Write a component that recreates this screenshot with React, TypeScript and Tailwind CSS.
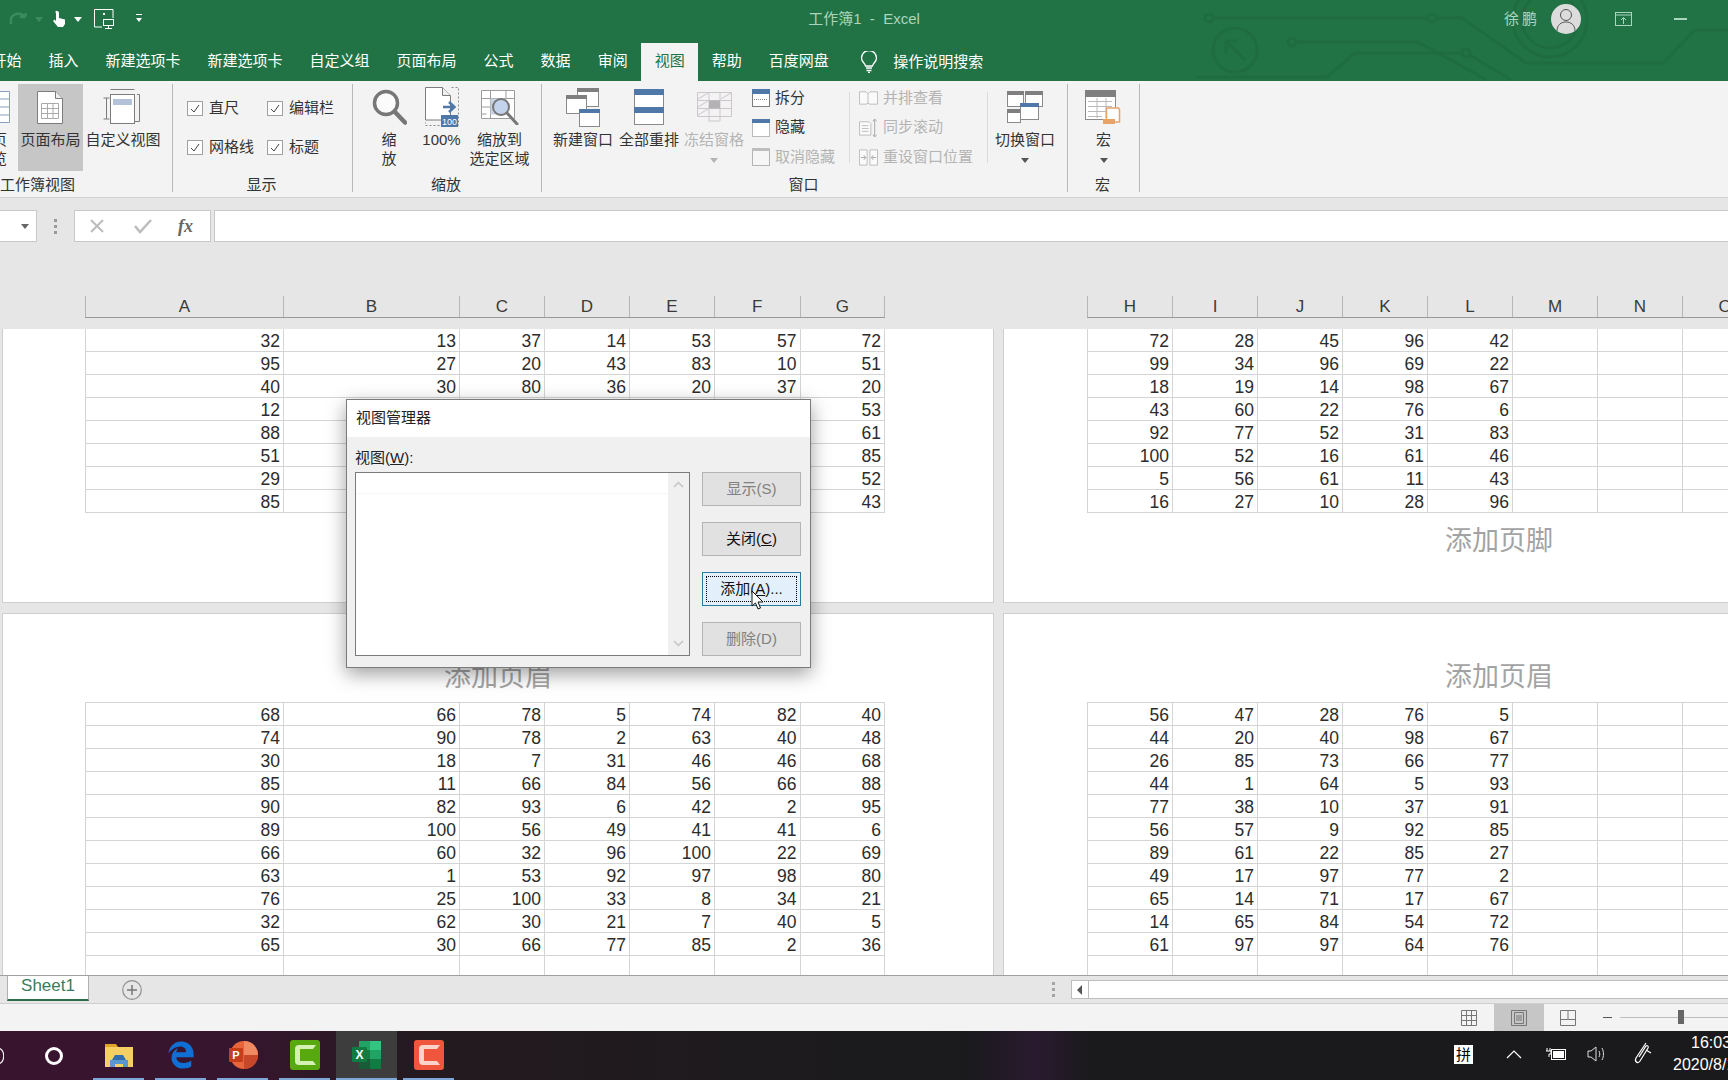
import React from "react";
import { FaEdgeLegacy } from "react-icons/fa6";

const leftW = ["w-[198px]", "w-[176px]", "w-[85px]", "w-[85px]", "w-[85px]", "w-[85.500px]", "w-[85.500px]"];
const rightW = Array(9).fill("w-[85px]");
const leftH = ["A", "B", "C", "D", "E", "F", "G"];
const rightH = ["H", "I", "J", "K", "L", "M", "N", "O", ""];

const tl: (number | string)[][] = [
  [32, 13, 37, 14, 53, 57, 72],
  [95, 27, 20, 43, 83, 10, 51],
  [40, 30, 80, 36, 20, 37, 20],
  [12, 21, 44, 63, 18, 75, 53],
  [88, 46, 9, 70, 35, 24, 61],
  [51, 93, 67, 28, 12, 90, 85],
  [29, 58, 34, 81, 47, 16, 52],
  [85, 72, 11, 39, 64, 55, 43],
];
const tr: (number | string)[][] = [
  [72, 28, 45, 96, 42],
  [99, 34, 96, 69, 22],
  [18, 19, 14, 98, 67],
  [43, 60, 22, 76, 6],
  [92, 77, 52, 31, 83],
  [100, 52, 16, 61, 46],
  [5, 56, 61, 11, 43],
  [16, 27, 10, 28, 96],
];
const bl: (number | string)[][] = [
  [68, 66, 78, 5, 74, 82, 40],
  [74, 90, 78, 2, 63, 40, 48],
  [30, 18, 7, 31, 46, 46, 68],
  [85, 11, 66, 84, 56, 66, 88],
  [90, 82, 93, 6, 42, 2, 95],
  [89, 100, 56, 49, 41, 41, 6],
  [66, 60, 32, 96, 100, 22, 69],
  [63, 1, 53, 92, 97, 98, 80],
  [76, 25, 100, 33, 8, 34, 21],
  [32, 62, 30, 21, 7, 40, 5],
  [65, 30, 66, 77, 85, 2, 36],
  ["", "", "", "", "", "", ""],
];
const br: (number | string)[][] = [
  [56, 47, 28, 76, 5],
  [44, 20, 40, 98, 67],
  [26, 85, 73, 66, 77],
  [44, 1, 64, 5, 93],
  [77, 38, 10, 37, 91],
  [56, 57, 9, 92, 85],
  [89, 61, 22, 85, 27],
  [49, 17, 97, 77, 2],
  [65, 14, 71, 17, 67],
  [14, 65, 84, 54, 72],
  [61, 97, 97, 64, 76],
  ["", "", "", "", ""],
];

function Table({ rows, widths, top }: { rows: (number | string)[][]; widths: string[]; top?: boolean }) {
  return (
    <div className={top ? "border-t border-[#d4d4d4] w-max" : "w-max"}>
      {rows.map((r, i) => (
        <div key={i} className="flex h-[23px]">
          {widths.map((w, j) => (
            <div
              key={j}
              className={`${w} shrink-0 h-[23px] box-border border-l border-b border-[#d4d4d4] text-right pr-[3px] pt-[1px] leading-[23px] text-[17.5px] text-[#2c2c2c] overflow-hidden [font-family:'Liberation_Sans_Narrow','Liberation_Sans',sans-serif] ${
                j === widths.length - 1 ? "border-r" : ""
              }`}
            >
              {r[j] ?? ""}
            </div>
          ))}
        </div>
      ))}
    </div>
  );
}

function ColHeader({ labels, widths }: { labels: string[]; widths: string[] }) {
  return (
    <div className="flex w-max h-[22px] border-b border-[#9a9a9a]">
      {labels.map((l, i) => (
        <div
          key={i}
          className={`${widths[i]} shrink-0 box-border border-l border-[#b6b6b6] ${
            i === labels.length - 1 ? "border-r" : ""
          } flex items-center justify-center text-[17px] text-[#3a3a3a]`}
        >
          {l}
        </div>
      ))}
    </div>
  );
}

function Caret({ color = "#555", className = "" }: { color?: string; className?: string }) {
  return (
    <svg width="8" height="5" viewBox="0 0 8 5" className={className}>
      <path d="M0 0h8L4 5z" fill={color} />
    </svg>
  );
}

function BigBtn({
  w,
  icon,
  lines,
  caret,
  active,
  disabled,
}: {
  w: string;
  icon: React.ReactNode;
  lines: string[];
  caret?: boolean;
  active?: boolean;
  disabled?: boolean;
}) {
  return (
    <div className={`${w} h-[87px] shrink-0 flex flex-col items-center ${active ? "bg-[#c6c6c6]" : ""}`}>
      <div className="h-[46px] flex items-center justify-center shrink-0">{icon}</div>
      <div className={`text-center leading-[19px] whitespace-nowrap ${disabled ? "text-[#b4b4b4]" : "text-[#333]"}`}>
        {lines.map((l) => (
          <div key={l}>{l}</div>
        ))}
      </div>
      {caret && <Caret color={disabled ? "#b4b4b4" : "#555"} className="mt-[9px]" />}
    </div>
  );
}

function Check({ label, w }: { label: string; w: string }) {
  return (
    <div className={`${w} h-[20px] flex items-center gap-[6px] text-[#333]`}>
      <svg width="16" height="15" viewBox="0 0 16 15" className="shrink-0">
        <rect x="0.5" y="0.5" width="15" height="14" fill="#fdfdfd" stroke="#a0a0a0" />
        <path d="M4 8l3 3 5-7" fill="none" stroke="#444" strokeWidth="1" />
      </svg>
      <span>{label}</span>
    </div>
  );
}

function SmallRow({ icon, label, disabled }: { icon: React.ReactNode; label: string; disabled?: boolean }) {
  return (
    <div className={`h-[20px] flex items-center gap-[5px] whitespace-nowrap ${disabled ? "text-[#b4b4b4]" : "text-[#333]"}`}>
      <div className="w-[19px] h-[20px] flex items-center justify-center shrink-0">{icon}</div>
      <span>{label}</span>
    </div>
  );
}

function Group({ w, label, children, labelClass }: { w: string; label: string; children: React.ReactNode; labelClass?: string }) {
  return (
    <div className={`${w} h-[108px] shrink-0 box-border border-r border-[#b8b8b8] flex flex-col overflow-hidden`}>
      <div className="h-[87px] flex shrink-0">{children}</div>
      <div className={`mt-[4px] leading-[20px] text-[#333] whitespace-nowrap ${labelClass ?? "text-center pr-[2px]"}`}>{label}</div>
    </div>
  );
}

const G = "#7c7c7c";
const BLUE = "#4f77a8";

const PageLayoutIcon = () => (
  <svg width="26" height="33" viewBox="0 0 26 33" className="-translate-x-[1px]">
    <path d="M.5.5h18l7 7v25H.5z" fill="#fff" stroke={G} />
    <path d="M18.5.5v7h7" fill="#eee" stroke={G} />
    <path d="M4.5 12.5h17v15h-17zM4.5 17.5h17M4.5 22.5h17M10.5 12.5v15M16 12.5v15" fill="none" stroke="#a9a9a9" />
  </svg>
);
const CustomViewIcon = () => (
  <svg width="37" height="36" viewBox="0 0 37 36" className="-translate-x-[2px]">
    <path d="M7.5.5h24M.5 9h6M.5 30h6M3.5 9v21" fill="none" stroke={G} />
    <path d="M34 5.5h2.500v27H32" fill="none" stroke={G} />
    <rect x="7.500" y="5.500" width="24" height="29" fill="#fff" stroke={G} />
    <rect x="10" y="10" width="19" height="6" fill="#b3c2d8" />
  </svg>
);
const MagnifierIcon = () => (
  <svg width="35" height="36" viewBox="0 0 35 36">
    <circle cx="14" cy="14" r="11.500" fill="#fbfbfb" stroke="#777" strokeWidth="3.500" />
    <path d="M22.500 22.500L33 33.500" stroke="#777" strokeWidth="4.500" strokeLinecap="round" />
  </svg>
);
const HundredIcon = () => (
  <svg width="34" height="40" viewBox="0 0 34 40">
    <path d="M26.500.5h7v38h-33v-3" fill="none" stroke="#8a8a8a" strokeDasharray="2 2" />
    <path d="M.5.5h17l8 8V33H.5z" fill="#fff" stroke={G} />
    <path d="M17.500.5v8h8" fill="#eee" stroke={G} />
    <path d="M18 20h11M24 15l5.500 5-5.500 5" fill="none" stroke={BLUE} strokeWidth="2.500" />
    <rect x="16" y="28" width="17" height="12" fill={BLUE} />
    <text x="24.500" y="37.500" fontSize="9" fill="#fff" textAnchor="middle" fontFamily="Liberation Sans">100</text>
  </svg>
);
const ZoomSelIcon = () => (
  <svg width="38" height="35" viewBox="0 0 38 35">
    <path d="M.5.5h33v28h-33zM.5 8.500h33M.5 17h9M.5 24h5M9.500.5V29M25 .5v9" fill="#fff" stroke="#9c9c9c" />
    <rect x="9.500" y="8.500" width="15" height="16" fill="#c9d3e3" />
    <circle cx="20" cy="17" r="8" fill="#c3d3ec" stroke="#777" strokeWidth="2" />
    <path d="M26 23l10 11" stroke="#777" strokeWidth="3" strokeLinecap="round" />
  </svg>
);
const Win = ({ x, y, w, h, bar }: { x: number; y: number; w: number; h: number; bar: string }) => (
  <g>
    <rect x={x + 0.5} y={y + 0.5} width={w} height={h} fill="#fff" stroke="#8a8a8a" />
    <rect x={x} y={y} width={w + 1} height={4} fill={bar} />
  </g>
);
const NewWinIcon = () => (
  <svg width="35" height="39" viewBox="0 0 35 39">
    <Win x={11} y={0} w={21} h={18} bar="#7f7f7f" />
    <Win x={0} y={7} w={20} h={18} bar="#7f7f7f" />
    <Win x={13} y={21} w={20} h={17} bar={BLUE} />
  </svg>
);
const ArrangeIcon = () => (
  <svg width="30" height="36" viewBox="0 0 30 36">
    <rect x=".5" y=".5" width="29" height="35" fill="#fff" stroke="#8a8a8a" />
    <rect x="0" y="0" width="30" height="6" fill={BLUE} />
    <rect x="0" y="18" width="30" height="6" fill={BLUE} />
  </svg>
);
const FreezeIcon = () => (
  <svg width="35" height="30" viewBox="0 0 35 30">
    <path d="M.5.5h34v24h-34zM.5 8.500h34M.5 16.500h34M12 .5v29M23 .5v24M1 7l10-6M1 15l10-6M1 23l10-6M24 7l10-6M12 29h11V25" fill="none" stroke="#cdc6cd" />
    <rect x="12" y="8.500" width="11" height="8" fill="#b5b2b5" />
  </svg>
);
const SplitIcon = () => (
  <svg width="18" height="18" viewBox="0 0 18 18">
    <rect x=".5" y=".5" width="17" height="17" fill="#fff" stroke="#7d7d7d" />
    <rect width="18" height="5" fill={BLUE} />
    <path d="M2 10.500h14" stroke="#888" strokeDasharray="1 1" />
  </svg>
);
const HideIcon = () => (
  <svg width="18" height="18" viewBox="0 0 18 18">
    <rect x=".5" y=".5" width="17" height="17" fill="#fff" stroke="#7d7d7d" strokeDasharray="1 1" />
    <rect width="18" height="4" fill={BLUE} />
  </svg>
);
const UnhideIcon = () => (
  <svg width="18" height="18" viewBox="0 0 18 18">
    <rect x=".5" y=".5" width="17" height="17" fill="#f6f6f6" stroke="#b4b4b4" />
    <rect width="18" height="3" fill="#bdbdbd" />
  </svg>
);
const SideBySideIcon = () => (
  <svg width="20" height="16" viewBox="0 0 20 16">
    <path d="M.5 1.500h7l2 2 2-2h8v13h-8l-2-1-2 1h-7zM9.500 3.500v10" fill="#fafafa" stroke="#bcbcbc" />
  </svg>
);
const SyncScrollIcon = () => (
  <svg width="20" height="20" viewBox="0 0 20 20">
    <path d="M.5 3.500h10l2 2v12h-12zM3 7.500h7M3 10.500h7M3 13.500h7" fill="#fafafa" stroke="#bcbcbc" />
    <path d="M16.500 1v18M14.500 3l2-2.500 2 2.500M14.500 17l2 2.500 2-2.500" fill="none" stroke="#a8a8a8" />
  </svg>
);
const ResetPosIcon = () => (
  <svg width="20" height="17" viewBox="0 0 20 17">
    <path d="M.5.5h8v16h-8zM11.500.5h8v16h-8z" fill="#fafafa" stroke="#bcbcbc" />
    <path d="M2 8.500h5M5 6l2 2.500-2 2.500M13 8.500h5M15 6l-2 2.500 2 2.500" fill="none" stroke="#a8a8a8" />
  </svg>
);
const SwitchIcon = () => (
  <svg width="36" height="32" viewBox="0 0 36 32">
    <Win x={0} y={0} w={16} h={15} bar="#7f7f7f" />
    <Win x={18} y={0} w={17} h={15} bar="#7f7f7f" />
    <Win x={0} y={18} w={13} h={13} bar="#7f7f7f" />
    <Win x={13} y={12} w={18} h={16} bar={BLUE} />
  </svg>
);
const MacroIcon = () => (
  <svg width="37" height="34" viewBox="0 0 37 34">
    <rect x=".5" y=".5" width="30" height="29" fill="#fff" stroke="#8a8a8a" />
    <rect width="31" height="7" fill="#7f7f7f" />
    <path d="M3 11.500h24M3 16.500h24M3 21.500h24M3 26.500h14M12 8v20M21 8v20" stroke="#b9b9b9" />
    <path d="M21.500 18h12l1 1.500V32h-13z" fill="#fff" stroke="#e8a468" strokeWidth="1.500" />
    <rect x="18" y="29" width="12" height="5" fill="#e8a468" />
  </svg>
);

const Circuit = () => (
  <svg width="1728" height="81" viewBox="0 0 1728 81" className="absolute left-0 top-0" fill="none" stroke="#1e6c40" strokeWidth="3">
    <circle cx="1209" cy="18" r="4" />
    <path d="M1213 18h215" />
    <circle cx="1432" cy="18" r="4" />
    <path d="M1436 18h26l64 45h137l32-33h33" />
    <circle cx="1292" cy="42" r="4" />
    <path d="M1296 42h122l69 38" />
    <path d="M1196 77h131l28-24h107" />
    <circle cx="1466" cy="53" r="4" />
    <path d="M1470 55l41 25" />
    <circle cx="1235" cy="50" r="22" />
    <path d="M1245 60l-19-19M1226 41v12M1226 41h12" />
    <circle cx="1550" cy="20" r="37" />
    <circle cx="1550" cy="20" r="28" />
  </svg>
);

const tabs = ["开始", "插入", "新建选项卡", "新建选项卡", "自定义组", "页面布局", "公式", "数据", "审阅", "视图", "帮助", "百度网盘"];

function DialogBtn({ children, state }: { children: React.ReactNode; state: "disabled" | "normal" | "focus" }) {
  if (state === "focus") {
    return (
      <div className="h-[34px] box-border border border-[#2b7a9c] bg-[#e3f0fb] p-[3px]">
        <div className="h-full border border-dotted border-black flex items-center justify-center text-[#111]">{children}</div>
      </div>
    );
  }
  return (
    <div
      className={`h-[34px] box-border border border-[#b4b4b4] bg-[#e1e1e1] flex items-center justify-center pt-[1px] ${
        state === "disabled" ? "text-[#808080]" : "text-[#111]"
      }`}
    >
      {children}
    </div>
  );
}

const Dialog = () => (
  <div className="absolute left-[346px] top-[399px] w-[465px] h-[269px] box-border border border-[#7b7b7b] bg-[#f0f0f0] shadow-[0_6px_18px_rgba(0,0,0,0.38)] flex flex-col">
    <div className="h-[37px] bg-white flex items-center pl-[9px] text-[15px] text-[#222] shrink-0">视图管理器</div>
    <div className="flex-1 px-[8px] flex flex-col">
      <div className="h-[35px] flex items-center text-[15px] text-[#222] pt-[7px] shrink-0">
        <span>
          视图(<u>W</u>):
        </span>
      </div>
      <div className="flex gap-[12px] text-[15px]">
        <div className="w-[335px] h-[184px] box-border border border-[#7b7b7b] bg-white flex">
          <div className="flex-1 pt-[20px]">
            <div className="h-[1px] bg-[#f7f7f7]" />
          </div>
          <div className="w-[21px] bg-[#f0f0f0] flex flex-col items-center justify-between py-[8px]">
            <svg width="11" height="7" viewBox="0 0 11 7">
              <path d="M1 6l4.500-4.500L10 6" fill="none" stroke="#c4c4c4" strokeWidth="1.500" />
            </svg>
            <svg width="11" height="7" viewBox="0 0 11 7">
              <path d="M1 1l4.500 4.500L10 1" fill="none" stroke="#c4c4c4" strokeWidth="1.500" />
            </svg>
          </div>
        </div>
        <div className="w-[99px] flex flex-col gap-[16px]">
          <DialogBtn state="disabled">显示(S)</DialogBtn>
          <DialogBtn state="normal">
            <span>
              关闭(<u>C</u>)
            </span>
          </DialogBtn>
          <DialogBtn state="focus">
            <span>
              添加(<u>A</u>)...
            </span>
          </DialogBtn>
          <DialogBtn state="disabled">删除(D)</DialogBtn>
        </div>
      </div>
    </div>
    <svg width="13" height="20" viewBox="0 0 13 20" className="absolute left-[404px] top-[190px]">
      <path d="M1 1v15l3.500-3 2.500 6 2.500-1-2.500-6H12z" fill="#fff" stroke="#111" />
    </svg>
  </div>
);

const Folder = () => (
  <svg width="28" height="28" viewBox="0 0 28 28">
    <path d="M0 3h11l2 3H0z" fill="#e0a526" />
    <path d="M0 6h28v20H0z" fill="#f5cf63" />
    <path d="M5 26v-7h18v7h-5v-3H10v3z" fill="#5a96cf" />
    <path d="M7 19l3-5h8l3 5z" fill="#2f6fb0" />
  </svg>
);
const Ppt = () => (
  <svg width="30" height="30" viewBox="0 0 30 30">
    <circle cx="16" cy="15" r="14" fill="#e8643a" />
    <path d="M16 1a14 14 0 0 1 14 14H16z" fill="#f08a63" />
    <path d="M16 15h14a14 14 0 0 1-14 14z" fill="#c7472a" />
    <rect x="1" y="8" width="14" height="14" rx="1" fill="#c43e1c" />
    <text x="8" y="19" fontSize="11" fontWeight="700" fill="#fff" textAnchor="middle" fontFamily="Liberation Sans">P</text>
  </svg>
);
const Cam = ({ fill, inner }: { fill: string; inner: string }) => (
  <svg width="30" height="30" viewBox="0 0 30 30">
    <rect width="30" height="30" rx="3" fill={fill} />
    <path d="M26 5H9Q5 5 5 9v12q0 4 4 4h17l-3-4H10V9h13z" fill={inner} />
  </svg>
);
const ExcelIcon = () => (
  <svg width="30" height="30" viewBox="0 0 30 30">
    <rect x="7" y="1" width="22" height="28" rx="1" fill="#21a366" />
    <rect x="18" y="1" width="11" height="9" fill="#33c481" />
    <rect x="7" y="10" width="11" height="9" fill="#107c41" />
    <rect x="18" y="19" width="11" height="10" fill="#107c41" />
    <rect x="7" y="19" width="11" height="10" fill="#185c37" />
    <rect y="7" width="15" height="15" rx="1" fill="#107c41" />
    <text x="7.500" y="19" fontSize="12" fontWeight="700" fill="#fff" textAnchor="middle" fontFamily="Liberation Sans">X</text>
  </svg>
);

function TaskItem({ children, active }: { children: React.ReactNode; active?: boolean }) {
  return (
    <div className={`h-[50px] flex flex-col items-center ${active ? "w-[61px] bg-[#3d3d3d]" : "w-[51px]"}`}>
      <div className="h-[47px] flex items-center justify-center">{children}</div>
      <div className="h-[3px] w-full bg-[#7ea7d8]" />
    </div>
  );
}

export default function App() {
  return (
    <div className="w-[1728px] h-[1080px] overflow-hidden flex flex-col bg-[#e6e6e6] text-[15px] [font-family:'Liberation_Sans','Noto_Sans_CJK_SC',sans-serif]">
      {/* Title + tabs */}
      <div className="relative h-[81px] bg-[#217346] shrink-0 overflow-hidden">
        <Circuit />
        <div className="relative h-[43px] pb-[5px] flex items-center">
          <div className="flex-1 flex items-center">
            <svg width="18" height="14" viewBox="0 0 18 14" className="ml-[9px] mr-[8px]">
              <path d="M16 5C12 0 5 1 2 6v6M16 5l1-4M16 5l-5 0" fill="none" stroke="#3c8a60" strokeWidth="2.500" />
            </svg>
            <Caret color="#3f8a61" className="mr-[9px]" />
            <svg width="15" height="18" viewBox="0 0 15 18" className="mr-[7px]">
              <path d="M5 1a2 2 0 0 1 2 2v5l6 1.500V14l-2 3H6L1 11l1.500-1.500L4 11V3a1 1 0 0 1 1-2z" fill="#fff" />
            </svg>
            <Caret color="#fff" className="mr-[12px]" />
            <svg width="20" height="20" viewBox="0 0 20 20" className="mr-[21px]">
              <path d="M12 .5H.5V18H8" fill="none" stroke="#fff" />
              <path d="M12 .5h7V9" fill="none" stroke="#fff" />
              <rect x="9.500" y="10.500" width="10" height="6" fill="none" stroke="#fff" />
              <path d="M14.500 17v3M11 19.500h7" stroke="#fff" />
              <rect x="9" y="4" width="2" height="2" fill="#fff" />
            </svg>
            <svg width="8" height="10" viewBox="0 0 8 10">
              <path d="M1 .5h6" stroke="#fff" />
              <path d="M1 4h6L4 8z" fill="#fff" />
            </svg>
          </div>
          <div className="text-[15px] text-[#a9d6bc] whitespace-nowrap">工作簿1&nbsp; -&nbsp; Excel</div>
          <div className="flex-1 flex items-center justify-end">
            <span className="text-[#a9d6bc] text-[15px] tracking-[3px] mr-[11px]">徐鹏</span>
            <div className="w-[30px] h-[30px] rounded-full bg-[#dcdcdc] flex items-center justify-center mr-[34px] overflow-hidden">
              <svg width="22" height="24" viewBox="0 0 22 24">
                <circle cx="11" cy="8" r="5.500" fill="none" stroke="#555" />
                <path d="M2 24c0-6 4-9 9-9s9 3 9 9" fill="none" stroke="#555" />
              </svg>
            </div>
            <svg width="17" height="14" viewBox="0 0 17 14" className="mr-[42px]">
              <rect x=".5" y=".5" width="16" height="13" fill="none" stroke="#a9d6bc" />
              <path d="M1 3h15" stroke="#a9d6bc" />
              <path d="M8.500 12V6M6 8l2.500-2.500L11 8" fill="none" stroke="#a9d6bc" />
            </svg>
            <div className="w-[13px] h-[1.500px] bg-[#a9d6bc] mr-[41px]" />
          </div>
        </div>
        <div className="relative h-[38px] flex items-stretch -ml-[22px] text-white">
          {tabs.map((t, i) => (
            <div
              key={i}
              className={`px-[13.500px] flex items-center whitespace-nowrap pb-[1px] ${
                t === "视图" ? "bg-[#f3f3f3] text-[#217346]" : ""
              }`}
            >
              {t}
            </div>
          ))}
          <svg width="18" height="22" viewBox="0 0 18 22" className="ml-[18px] self-center">
            <path d="M5.500 15C5 12 1.500 11 1.500 7a7.500 7.500 0 0 1 15 0c0 4-3.500 5-4 8z" fill="none" stroke="#fff" strokeWidth="1.300" />
            <path d="M6 17h6M6.500 19.500h5M8 21.500h2" stroke="#fff" strokeWidth="1.300" />
          </svg>
          <div className="ml-[15px] self-center whitespace-nowrap">操作说明搜索</div>
        </div>
      </div>

      {/* Ribbon */}
      <div className="h-[117px] bg-[#f3f3f3] shrink-0 border-b border-[#d2d2d2] box-border pt-[3px] flex items-start text-[15px]">
        <Group w="w-[173px]" label="工作簿视图" labelClass="w-[74px] text-center">
          <div className="w-[18px] h-[87px] shrink-0 overflow-hidden flex flex-col items-start">
            <div className="h-[46px] flex items-center">
              <svg width="10" height="32" viewBox="0 0 10 32">
                <path d="M-1 .5h10.500v31H-1M-1 8h10.500M-1 16h10.500M-1 24h10.500" fill="#fff" stroke="#8aa0bd" />
              </svg>
            </div>
            <div className="leading-[19px] text-[#333] w-[15px] -ml-[8px]">
              <div>页</div>
              <div>览</div>
            </div>
          </div>
          <BigBtn w="w-[65px]" icon={<PageLayoutIcon />} lines={["页面布局"]} active />
          <BigBtn w="w-[80px]" icon={<CustomViewIcon />} lines={["自定义视图"]} />
        </Group>
        <Group w="w-[180px]" label="显示">
          <div className="pl-[14px] pt-[14px] flex flex-col gap-[19px]">
            <div className="flex">
              <Check w="w-[80px]" label="直尺" />
              <Check w="w-[80px]" label="编辑栏" />
            </div>
            <div className="flex">
              <Check w="w-[80px]" label="网格线" />
              <Check w="w-[80px]" label="标题" />
            </div>
          </div>
        </Group>
        <Group w="w-[189px]" label="缩放">
          <div className="w-[6px]" />
          <BigBtn w="w-[60px]" icon={<MagnifierIcon />} lines={["缩", "放"]} />
          <BigBtn w="w-[45px]" icon={<HundredIcon />} lines={["100%"]} />
          <BigBtn w="w-[71px]" icon={<ZoomSelIcon />} lines={["缩放到", "选定区域"]} />
        </Group>
        <Group w="w-[526px]" label="窗口">
          <div className="w-[11px]" />
          <BigBtn w="w-[60px]" icon={<NewWinIcon />} lines={["新建窗口"]} />
          <BigBtn w="w-[72px]" icon={<ArrangeIcon />} lines={["全部重排"]} />
          <BigBtn w="w-[58px]" icon={<FreezeIcon />} lines={["冻结窗格"]} caret disabled />
          <div className="w-[106px] pl-[8px] pt-[4px] flex flex-col gap-[9.500px] shrink-0">
            <SmallRow icon={<SplitIcon />} label="拆分" />
            <SmallRow icon={<HideIcon />} label="隐藏" />
            <SmallRow icon={<UnhideIcon />} label="取消隐藏" disabled />
          </div>
          <div className="w-[1px] h-[71px] mt-[8px] shrink-0 bg-[#dcdcdc]" />
          <div className="w-[137px] shrink-0 pl-[9px] flex flex-col gap-[9.500px] pt-[4px]">
            <SmallRow icon={<SideBySideIcon />} label="并排查看" disabled />
            <SmallRow icon={<SyncScrollIcon />} label="同步滚动" disabled />
            <SmallRow icon={<ResetPosIcon />} label="重设窗口位置" disabled />
          </div>
          <div className="w-[1px] h-[71px] mt-[8px] shrink-0 bg-[#dcdcdc]" />
          <BigBtn w="w-[74px]" icon={<SwitchIcon />} lines={["切换窗口"]} caret />
        </Group>
        <Group w="w-[72px]" label="宏">
          <BigBtn w="w-[71px]" icon={<MacroIcon />} lines={["宏"]} caret />
        </Group>
      </div>

      {/* Formula bar */}
      <div className="h-[44px] shrink-0 bg-[#e6e6e6] pt-[12px] flex items-stretch">
        <div className="w-[37px] box-border bg-white border border-l-0 border-[#c8c8c8] flex items-center justify-end pr-[7px]">
          <Caret color="#666" />
        </div>
        <div className="w-[37px] flex items-center justify-center">
          <svg width="3" height="15" viewBox="0 0 3 15">
            <rect width="3" height="3" fill="#9a9a9a" />
            <rect y="6" width="3" height="3" fill="#9a9a9a" />
            <rect y="12" width="3" height="3" fill="#9a9a9a" />
          </svg>
        </div>
        <div className="w-[137px] box-border bg-white border border-[#c8c8c8] flex items-center">
          <svg width="16" height="16" viewBox="0 0 16 16" className="ml-[14px]">
            <path d="M2 2l12 12M14 2L2 14" stroke="#bdbdbd" strokeWidth="2" />
          </svg>
          <svg width="18" height="16" viewBox="0 0 18 16" className="ml-[29px]">
            <path d="M1 8l5 6L17 2" fill="none" stroke="#bdbdbd" strokeWidth="2.500" />
          </svg>
          <span className="ml-[26px] text-[18px] italic font-bold text-[#666] [font-family:'Liberation_Serif',serif]">fx</span>
        </div>
        <div className="w-[3px]" />
        <div className="flex-1 box-border bg-white border border-r-0 border-[#c8c8c8]" />
      </div>

      {/* Sheet */}
      <div className="h-[733px] shrink-0 flex relative overflow-hidden">
        <div className="w-[1003px] shrink-0 flex flex-col">
          <div className="h-[87px] pt-[54px] pl-[85px] shrink-0">
            <ColHeader labels={leftH} widths={leftW} />
          </div>
          <div className="ml-[2px] w-[992px] h-[274px] shrink-0 box-border bg-white border-l border-r border-[#cfcfcf] border-b">
            <div className="pl-[82px]">
              <Table rows={tl} widths={leftW} />
            </div>
            <div className="h-[56px] flex items-center justify-center text-[27px] text-[#a3a3a3]">添加页脚</div>
          </div>
          <div className="h-[10px] shrink-0" />
          <div className="ml-[2px] w-[992px] h-[362px] shrink-0 box-border bg-white border-l border-r border-t border-[#cfcfcf]">
            <div className="h-[88px] pt-[47px] flex justify-center text-[27px] leading-[32px] text-[#a3a3a3]">添加页眉</div>
            <div className="pl-[82px]">
              <Table rows={bl} widths={leftW} top />
            </div>
          </div>
        </div>
        <div className="flex-1 min-w-0 flex flex-col overflow-hidden">
          <div className="h-[87px] pt-[54px] pl-[84px] shrink-0">
            <ColHeader labels={rightH} widths={rightW} />
          </div>
          <div className="h-[274px] shrink-0 box-border bg-white border-l border-b border-[#cfcfcf] overflow-hidden">
            <div className="pl-[83px]">
              <Table rows={tr} widths={rightW} />
            </div>
            <div className="h-[56px] flex items-center pl-[441px] text-[27px] text-[#a3a3a3]">添加页脚</div>
          </div>
          <div className="h-[10px] shrink-0" />
          <div className="h-[362px] shrink-0 box-border bg-white border-l border-t border-[#cfcfcf] overflow-hidden">
            <div className="h-[88px] pt-[47px] pl-[441px] text-[27px] leading-[32px] text-[#a3a3a3]">添加页眉</div>
            <div className="pl-[83px]">
              <Table rows={br} widths={rightW} top />
            </div>
          </div>
        </div>
      </div>

      {/* Sheet tabs */}
      <div className="h-[29px] shrink-0 border-t border-b border-t-[#a0a0a0] border-b-[#cfcfcf] box-border bg-[#e6e6e6] flex items-start">
        <div className="ml-[7px] w-[82px] h-[25px] box-border bg-white border-b-2 border-x border-x-[#b0b0b0] border-b-[#2f6b4a] flex items-center justify-center pb-[3px] text-[17px] text-[#3d7a5c]">
          Sheet1
        </div>
        <svg width="20" height="20" viewBox="0 0 20 20" className="ml-[33px] mt-[4px]">
          <circle cx="10" cy="10" r="9.300" fill="none" stroke="#8f8f8f" strokeWidth="1.200" />
          <path d="M10 5v10M5 10h10" stroke="#777" strokeWidth="1.500" />
        </svg>
        <div className="flex-1" />
        <svg width="3" height="15" viewBox="0 0 3 15" className="mt-[6px] mr-[16px]">
          <rect width="3" height="3" fill="#a5a5a5" />
          <rect y="6" width="3" height="3" fill="#a5a5a5" />
          <rect y="12" width="3" height="3" fill="#a5a5a5" />
        </svg>
        <div className="w-[657px] h-[19px] mt-[4px] box-border border border-[#bdbdbd] border-r-0 bg-white flex">
          <div className="w-[17px] border-r border-[#bdbdbd] flex items-center justify-center">
            <svg width="6" height="10" viewBox="0 0 6 10">
              <path d="M5 0v10L0 5z" fill="#555" />
            </svg>
          </div>
        </div>
      </div>

      {/* Status bar */}
      <div className="h-[27px] shrink-0 bg-[#f3f3f3] flex items-center">
        <div className="w-[1461px] shrink-0" />
        <svg width="16" height="16" viewBox="0 0 16 16" className="mr-[17px]">
          <path d="M.5.5h15v15H.5zM.5 5.500h15M.5 10.500h15M5.500.5v15M10.500.5v15" fill="none" stroke="#777" />
        </svg>
        <div className="w-[50px] h-[27px] bg-[#c6c6c6] flex items-center justify-center mr-[16px]">
          <svg width="16" height="16" viewBox="0 0 16 16">
            <path d="M.5.5h15v15H.5z" fill="none" stroke="#777" />
            <path d="M3.500 2.500h9v11h-9zM5 6h6M5 8h6M5 10h6" fill="none" stroke="#777" />
          </svg>
        </div>
        <svg width="16" height="16" viewBox="0 0 16 16" className="mr-[27px]">
          <path d="M.5.500h15v15H.5zM.5 9.500h15M8 .5v9" fill="none" stroke="#777" />
        </svg>
        <div className="w-[9px] h-[1px] bg-[#555] mr-[8px]" />
        <div className="relative flex-1 h-[1px] bg-[#bdbdbd]">
          <div className="absolute left-[58px] -top-[7px] w-[6px] h-[14px] bg-[#666]" />
        </div>
      </div>

      {/* Taskbar */}
      <div className="h-[50px] shrink-0 flex items-start text-white bg-[linear-gradient(90deg,#38142f_0%,#38152f_13%,#241a20_24%,#1d1b1d_45%,#1a1a1c_56%,#2a1a30_60%,#1a1a1c_63%,#1a1a1c_100%)]">
        <div className="w-[93px] h-[50px] shrink-0 flex items-center overflow-hidden">
          <svg width="4" height="16" viewBox="0 0 4 16">
            <path d="M0 .5c5 3 5 12 0 15" fill="none" stroke="#fff" strokeWidth="1.200" />
          </svg>
          <div className="w-[18px] h-[18px] rounded-full border-[3px] border-white ml-[41px]" />
        </div>
        <div className="flex items-start gap-[11px]">
          <TaskItem><Folder /></TaskItem>
          <TaskItem><FaEdgeLegacy size={28} color="#0f6fd4" /></TaskItem>
          <TaskItem><Ppt /></TaskItem>
          <div className="-mr-[5px]"><TaskItem><Cam fill="#58a80f" inner="#d5f0b5" /></TaskItem></div>
          <div className="-mr-[5px]"><TaskItem active><ExcelIcon /></TaskItem></div>
          <TaskItem><Cam fill="#f0553d" inner="#fbd3cb" /></TaskItem>
        </div>
        <div className="ml-[1000px] h-[50px] flex items-center shrink-0 -translate-y-[2px]">
          <div className="w-[19px] h-[19px] bg-white text-black text-[15px] leading-[19px] text-center mr-[33px]">拼</div>
          <svg width="16" height="9" viewBox="0 0 16 9" className="mr-[24px]">
            <path d="M1 8l7-7 7 7" fill="none" stroke="#fff" strokeWidth="1.200" />
          </svg>
          <svg width="20" height="16" viewBox="0 0 20 16" className="mr-[21px]">
            <rect x="5.500" y="3.500" width="14" height="10" fill="none" stroke="#fff" />
            <rect x="7" y="5" width="11" height="7" fill="#fff" />
            <path d="M1 2v3M4 2v3M0 5h5v3H3v3" fill="none" stroke="#fff" />
          </svg>
          <svg width="20" height="18" viewBox="0 0 20 18" className="mr-[25px]">
            <path d="M1 6h3l5-4v14l-5-4H1zM12 6c1 2 1 4 0 6M15 3c2 4 2 8 0 12" fill="none" stroke="#ddd" />
          </svg>
          <svg width="20" height="24" viewBox="0 0 20 24" className="mr-[21px]">
            <path d="M14 1L4 16c-2 4 2 6 4 3l8-13c1-2-1-3-2-2L7 15M14 8l5 3" fill="none" stroke="#fff" strokeWidth="1.200" />
          </svg>
          <div className="w-[70px] overflow-hidden whitespace-nowrap leading-[22px] text-[16px]">
            <div className="pl-[18px]">16:03</div>
            <div>2020/8/10</div>
          </div>
        </div>
      </div>

      <Dialog />
    </div>
  );
}
